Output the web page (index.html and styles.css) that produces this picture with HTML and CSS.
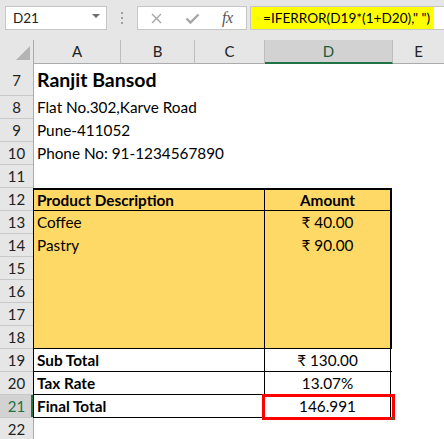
FILE: index.html
```html
<!DOCTYPE html>
<html>
<head>
<meta charset="utf-8">
<link rel="stylesheet" href="styles.css">
</head>
<body>
<div class="topbar">
  <div class="namebox"><span>D21</span><span class="caret"></span></div>
  <div class="grip"><i></i><i></i><i></i></div>
  <div class="fxbox">
    <svg class="ico-x" width="11" height="11" viewBox="0 0 11 11"><path d="M1 1L10 10M10 1L1 10" stroke="#a6a6a6" stroke-width="1.4" fill="none"/></svg>
    <svg class="ico-ok" width="15" height="11" viewBox="0 0 15 11"><path d="M1.5 5.5L5.5 9.5L13.5 1.5" stroke="#a6a6a6" stroke-width="2.4" fill="none"/></svg>
    <span class="fx">fx</span>
  </div>
  <div class="formula"><div class="hl">=IFERROR(D19*(1+D20),"&nbsp;")</div></div>
</div>
<div class="colheads">
  <div class="corner"><span class="tri"></span></div>
  <div class="ch">A</div>
  <div class="ch">B</div>
  <div class="ch">C</div>
  <div class="ch sel">D</div>
  <div class="ch last">E</div>
</div>
<div class="body">
  <div class="rowheads">
    <div class="rh tall">7</div>
    <div class="rh">8</div>
    <div class="rh">9</div>
    <div class="rh">10</div>
    <div class="rh">11</div>
    <div class="rh">12</div>
    <div class="rh">13</div>
    <div class="rh">14</div>
    <div class="rh">15</div>
    <div class="rh">16</div>
    <div class="rh">17</div>
    <div class="rh">18</div>
    <div class="rh">19</div>
    <div class="rh">20</div>
    <div class="rh sel">21</div>
    <div class="rh">22</div>
  </div>
  <div class="cells">
    <div class="line tall"><span class="name">Ranjit Bansod</span></div>
    <div class="line">Flat No.302,Karve Road</div>
    <div class="line">Pune-411052</div>
    <div class="line">Phone No: 91-1234567890</div>
    <div class="line"></div>
    <div class="invoice">
      <div class="inv-row inv-head">
        <div class="desc bold">Product Description</div>
        <div class="amt bold">Amount</div>
      </div>
      <div class="inv-row inv-items">
        <div class="desc">
          <div class="it">Coffee</div>
          <div class="it">Pastry</div>
        </div>
        <div class="amt">
          <div class="it">₹ 40.00</div>
          <div class="it">₹ 90.00</div>
        </div>
      </div>
      <div class="inv-row inv-total">
        <div class="desc bold">Sub Total</div>
        <div class="amt">₹ 130.00</div>
      </div>
      <div class="inv-row inv-total">
        <div class="desc bold">Tax Rate</div>
        <div class="amt">13.07%</div>
      </div>
      <div class="inv-row inv-total">
        <div class="desc bold">Final Total</div>
        <div class="amt active">146.991<span class="handle"></span></div>
      </div>
    </div>
    <div class="line"></div>
  </div>
</div>
</body>
</html>
```
FILE: styles.css
```css
* { box-sizing: border-box; }
html, body { margin: 0; padding: 0; }
body {
  width: 444px;
  height: 439px;
  overflow: hidden;
  background: #fff;
  color: #000;
  font-family: Lato, "Liberation Sans", sans-serif;
}

/* formula bar */
.topbar {
  height: 40px;
  background: #e6e6e6;
  display: flex;
  align-items: flex-start;
  padding: 6px 0 0 5px;
}
.namebox {
  width: 102px;
  height: 24px;
  background: #fff;
  border: 1px solid #c6c6c6;
  display: flex;
  align-items: center;
  justify-content: space-between;
  padding: 0 6px 0 7px;
  font-size: 13.5px;
  color: #222;
}
.caret {
  width: 0;
  height: 0;
  border-left: 4px solid transparent;
  border-right: 4px solid transparent;
  border-top: 4px solid #6d6d6d;
  margin-top: -4px;
}
.grip {
  width: 30px;
  height: 24px;
  display: flex;
  flex-direction: column;
  align-items: center;
  justify-content: center;
  gap: 3px;
}
.grip i {
  display: block;
  width: 2px;
  height: 2px;
  background: #a0a0a0;
}
.fxbox {
  width: 110px;
  height: 24px;
  background: #fff;
  border: 1px solid #c6c6c6;
  display: flex;
  align-items: center;
  padding-left: 13px;
}
.ico-x { margin-top: 1px; }
.ico-ok { margin-left: 23px; margin-top: 1px; }
.fx {
  margin-left: 22px;
  font-family: "Liberation Serif", serif;
  font-style: italic;
  font-size: 16px;
  color: #555;
  letter-spacing: -0.5px;
}
.formula {
  flex: 1;
  height: 24px;
  margin-left: 3px;
  background: #fff;
  border: 1px solid #c6c6c6;
  border-right: none;
}
.hl {
  width: 183px;
  height: 22px;
  background: #ffff00;
  padding-left: 12px;
  line-height: 22px;
  font-size: 13.6px;
  white-space: nowrap;
}

/* column headers */
.colheads {
  display: grid;
  grid-template-columns: 34px 87px 74px 70px 128px 1fr;
  height: 23px;
  background: #e6e6e6;
}
.corner {
  border-right: 1px solid #ababab;
  border-bottom: 1px solid #ababab;
  display: flex;
  align-items: flex-end;
  justify-content: flex-end;
  padding: 0 3px 3px 0;
}
.tri {
  width: 0;
  height: 0;
  border-left: 14px solid transparent;
  border-bottom: 14px solid #b4b4b4;
}
.ch {
  border-right: 1px solid #bdbdbd;
  border-bottom: 1px solid #ababab;
  text-align: center;
  line-height: 22px;
  font-size: 15px;
  color: #222;
}
.ch.sel {
  background: #d2d2d2;
  border-bottom: 2px solid #217346;
  color: #1d5b38;
}
.ch.last { border-right: none; }

/* grid body */
.body { display: flex; }
.rowheads {
  width: 33px;
  background: #e6e6e6;
}
.rh {
  height: 23px;
  border-bottom: 1px solid #c8c8c8;
  text-align: center;
  line-height: 22px;
  font-size: 15px;
  color: #222;
}
.rh.tall { height: 33px; line-height: 34px; }
.rh.sel {
  background: #d2d2d2;
  color: #217346;
  box-shadow: inset -2px 0 0 #217346;
}
.cells { flex: 1; }
.line {
  height: 23px;
  border-left: 1px solid #ababab;
  padding-left: 3px;
  line-height: 23px;
  font-size: 15.3px;
  white-space: nowrap;
}
.line.tall { height: 33px; line-height: 34px; }
.name { font-weight: 700; font-size: 19.5px; }

/* invoice table */
.invoice {
  border-left: 1px solid #000;
  width: 359px;
  font-size: 15.3px;
}
.inv-row {
  display: grid;
  grid-template-columns: 231px 127px;
}
.desc {
  border-right: 1px solid #000;
  padding-left: 3px;
  white-space: nowrap;
}
.amt {
  text-align: center;
  white-space: nowrap;
}
.bold { font-weight: 700; }
.inv-head {
  height: 23px;
  background: #ffd966;
  border-top: 2px solid #000;
  border-bottom: 1px solid #000;
  line-height: 20px;
}
.inv-head .amt,
.inv-items .amt { border-right: 2px solid #000; }
.inv-items {
  height: 138px;
  background: #ffd966;
  border-bottom: 1px solid #000;
}
.it { height: 23px; line-height: 23px; }
.inv-total {
  height: 23px;
  border-bottom: 1px solid #000;
  line-height: 22px;
  grid-template-columns: 231px 126px;
}
.inv-total .amt { border-right: 1px solid #000; }
.amt.active { position: relative; }
.amt.active::after {
  content: "";
  position: absolute;
  top: -1px;
  left: -3px;
  right: -5px;
  bottom: -3px;
  border: 3px solid #ff0000;
}
.handle {
  position: absolute;
  right: -4px;
  bottom: -3px;
  width: 3px;
  height: 3px;
  background: #217346;
  z-index: 1;
}
```
